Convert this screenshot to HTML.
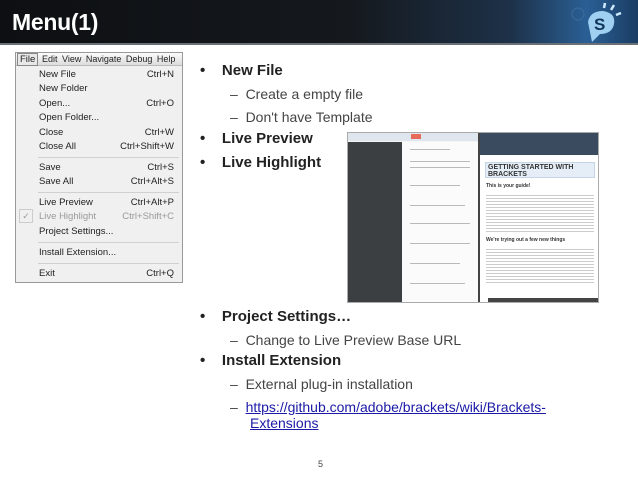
<!DOCTYPE html>
<html><head><meta charset="utf-8"><style>
*{margin:0;padding:0;box-sizing:border-box}
body{width:638px;height:478px;background:#fff;position:relative;overflow:hidden;font-family:"Liberation Sans",sans-serif}
.hdr{position:absolute;left:0;top:0;width:638px;height:45px;background:linear-gradient(90deg,#0d0f12 0%,#15191e 55%,#1d3148 80%,#2a5f95 92%,#1a3d63 100%);border-bottom:2px solid #6b7077}
.hdr h1{position:absolute;left:12px;top:9px;color:#fff;font-size:23px;font-weight:bold;letter-spacing:-0.3px}
.a{position:absolute;white-space:nowrap}
.b{font-size:15px;font-weight:bold;color:#222}
.s{font-size:14px;color:#444}
.menu{position:absolute;left:15px;top:52px;width:168px;height:231px;background:#f0f0f0;border:1px solid #999;font-size:9.5px;color:#222}
.mb{position:absolute;left:0;top:0;width:166px;height:13px;background:linear-gradient(#fbfbfb,#dcdcdc);border-bottom:1px solid #bbb;white-space:nowrap}
.mi{position:absolute;left:23px;right:8px;height:13px}
.mi span{position:absolute;right:0}
.sep{position:absolute;left:22px;right:3px;height:1px;background:#d0d0d0}
.code{position:absolute;height:1px;background:#b9b9b9}
</style></head><body>
<div class="hdr"><h1>Menu(1)</h1>
<svg style="position:absolute;left:570px;top:2px" width="60" height="44" viewBox="0 0 60 44">
<circle cx="8" cy="12" r="6" fill="none" stroke="#3a6a9a" stroke-width="1.2"/>
<path d="M22 40 L18 20 Q20 9 33 9 Q46 11 44 22 Q42 32 30 32 Z" fill="#9fd0f2"/>
<text x="24" y="28" font-size="17" font-weight="bold" fill="#12355a" font-family="Liberation Sans">S</text>
<path d="M34 6 L35 1 M41 8 L44 3 M46 13 L51 11" stroke="#cfe9ff" stroke-width="2.5"/>
</svg></div>

<div class="menu">
<div class="mb"><span style="position:absolute;left:1px;top:0;border:1px solid #888;background:#e8e8e8;padding:0 2px;line-height:11px">File</span>
<span style="position:absolute;left:26px;top:1px;line-height:11px;font-size:9px;word-spacing:2px">Edit View Navigate Debug Help</span></div>
<div class="mi" style="top:16px">New File<span>Ctrl+N</span></div>
<div class="mi" style="top:30px">New Folder</div>
<div class="mi" style="top:45px">Open...<span>Ctrl+O</span></div>
<div class="mi" style="top:59px">Open Folder...</div>
<div class="mi" style="top:74px">Close<span>Ctrl+W</span></div>
<div class="mi" style="top:88px">Close All<span>Ctrl+Shift+W</span></div>
<div class="sep" style="top:104px"></div>
<div class="mi" style="top:109px">Save<span>Ctrl+S</span></div>
<div class="mi" style="top:123px">Save All<span>Ctrl+Alt+S</span></div>
<div class="sep" style="top:139px"></div>
<div class="mi" style="top:144px">Live Preview<span>Ctrl+Alt+P</span></div>
<div class="mi" style="top:158px;color:#999">Live Highlight<span>Ctrl+Shift+C</span></div>
<div style="position:absolute;left:3px;top:156px;width:14px;height:14px;border:1px solid #ccc;color:#999;font-size:9px;text-align:center;line-height:12px">✓</div>
<div class="mi" style="top:173px">Project Settings...</div>
<div class="sep" style="top:189px"></div>
<div class="mi" style="top:194px">Install Extension...</div>
<div class="sep" style="top:210px"></div>
<div class="mi" style="top:215px">Exit<span>Ctrl+Q</span></div>
</div>

<div class="a b" style="left:200px;top:62px">•&nbsp;&nbsp;&nbsp;&nbsp;New File</div>
<div class="a s" style="left:230px;top:86px">–&nbsp;&nbsp;Create a empty file</div>
<div class="a s" style="left:230px;top:109px">–&nbsp;&nbsp;Don't have Template</div>
<div class="a b" style="left:200px;top:130px">•&nbsp;&nbsp;&nbsp;&nbsp;Live Preview</div>
<div class="a b" style="left:200px;top:154px">•&nbsp;&nbsp;&nbsp;&nbsp;Live Highlight</div>

<div style="position:absolute;left:347px;top:132px;width:252px;height:171px;background:#f4f4f4;border:1px solid #aaa;overflow:hidden">
<div style="position:absolute;left:0;top:0;width:130px;height:8px;background:#dfe6ee"></div>
<div style="position:absolute;left:63px;top:1px;width:10px;height:5px;background:#e86a5a"></div>
<div style="position:absolute;left:0;top:9px;width:54px;height:162px;background:#3c3f41"></div>
<div style="position:absolute;left:54px;top:9px;width:76px;height:162px;background:#fbfbfb"></div>
<div class="code" style="left:62px;top:16px;width:40px"></div>
<div class="code" style="left:62px;top:28px;width:60px"></div>
<div class="code" style="left:62px;top:34px;width:60px"></div>
<div class="code" style="left:62px;top:52px;width:50px"></div>
<div class="code" style="left:62px;top:72px;width:55px"></div>
<div class="code" style="left:62px;top:90px;width:60px"></div>
<div class="code" style="left:62px;top:110px;width:60px"></div>
<div class="code" style="left:62px;top:130px;width:50px"></div>
<div class="code" style="left:62px;top:150px;width:55px"></div>
<div style="position:absolute;left:130px;top:0;width:122px;height:171px;background:#fff;border-left:2px solid #444">
<div style="height:22px;background:#3a4b60"></div>
<div style="margin:7px 5px 0;background:#e5eef6;border:1px solid #c5d5e5;height:16px;font-size:7px;font-weight:bold;color:#333;padding:1px 2px;line-height:7px">GETTING STARTED WITH BRACKETS</div>
<div style="margin:5px 6px 0;font-size:5px;font-weight:bold;color:#333">This is your guide!</div>
<div style="margin:4px 6px;height:40px;background:repeating-linear-gradient(#fff 0 2px,#ccc 2px 3px)"></div>
<div style="margin:3px 6px;font-size:5px;font-weight:bold;color:#333">We're trying out a few new things</div>
<div style="margin:4px 6px;height:36px;background:repeating-linear-gradient(#fff 0 2px,#ccc 2px 3px)"></div>
<div style="position:absolute;left:8px;bottom:0;width:110px;height:6px;background:#444"></div>
</div>
</div>

<div class="a b" style="left:200px;top:308px">•&nbsp;&nbsp;&nbsp;&nbsp;Project Settings…</div>
<div class="a s" style="left:230px;top:332px">–&nbsp;&nbsp;Change to Live Preview Base URL</div>
<div class="a b" style="left:200px;top:352px">•&nbsp;&nbsp;&nbsp;&nbsp;Install Extension</div>
<div class="a s" style="left:230px;top:376px">–&nbsp;&nbsp;External plug-in installation</div>
<div class="a s" style="left:230px;top:399px">–&nbsp;&nbsp;<u style="color:#1a1aa6">https://github.com/adobe/brackets/wiki/Brackets-</u></div>
<div class="a s" style="left:250px;top:415px"><u style="color:#1a1aa6">Extensions</u></div>
<div class="a" style="left:318px;top:459px;font-size:9px;color:#444">5</div>
</body></html>
